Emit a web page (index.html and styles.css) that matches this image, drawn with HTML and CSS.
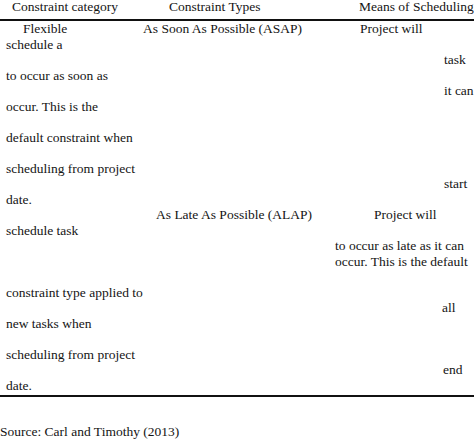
FILE: index.html
```html
<!DOCTYPE html>
<html>
<head>
<meta charset="utf-8">
<link rel="stylesheet" href="styles.css">
</head>
<body>
<div class="page">
  <div class="head">
    <div class="h1">Constraint category</div>
    <div class="h2">Constraint Types</div>
    <div class="h3">Means of Scheduling</div>
  </div>
  <div class="rule"></div>
  <div class="body">
    <div class="c1 r1 indent">Flexible</div>
    <div class="c1 r2">schedule a</div>
    <div class="c1 r4">to occur as soon as</div>
    <div class="c1 r6">occur. This is the</div>
    <div class="c1 r8">default constraint when</div>
    <div class="c1 r10">scheduling from project</div>
    <div class="c1 r12">date.</div>
    <div class="c1 r14">schedule task</div>
    <div class="c1 r18">constraint type applied to</div>
    <div class="c1 r20">new tasks when</div>
    <div class="c1 r22">scheduling from project</div>
    <div class="c1 r24">date.</div>

    <div class="c2 r1 asap">As Soon As Possible (ASAP)</div>
    <div class="c2 r13 alap">As Late As Possible (ALAP)</div>

    <div class="c3 r1 pw1">Project will</div>
    <div class="c3 r3 far">task</div>
    <div class="c3 r5 far">it can</div>
    <div class="c3 r11 far">start</div>
    <div class="c3 r13 pw2">Project will</div>
    <div class="c3 r15 near">to occur as late as it can</div>
    <div class="c3 r16 near">occur. This is the default</div>
    <div class="c3 r19 far2">all</div>
    <div class="c3 r23 far3">end</div>
  </div>
  <div class="rule bottom"></div>
  <div class="source">Source: Carl and Timothy (2013)</div>
</div>
</body>
</html>
```

FILE: styles.css
```css
html, body {
  margin: 0;
  padding: 0;
  background: #ffffff;
}
body {
  width: 474px;
  height: 439px;
  overflow: hidden;
  font-family: "Liberation Serif", "Times New Roman", serif;
  font-size: 13.5px;
  color: #141414;
}
.page {
  width: 474px;
}
.head {
  display: grid;
  grid-template-columns: 136px 190px 1fr;
  line-height: 13px;
  padding-bottom: 6px;
  white-space: nowrap;
}
.h1 { padding-left: 12px; }
.h2 { padding-left: 33px; }
.h3 { padding-left: 33px; }
.rule {
  height: 2px;
  background: #111111;
}
.rule.bottom {
  margin-top: 2px;
}
.body {
  display: grid;
  grid-template-columns: 136px 190px 1fr;
  grid-template-rows: repeat(24, 15.5px);
  line-height: 15.5px;
  white-space: nowrap;
}
.c1 { grid-column: 1; padding-left: 6px; }
.c2 { grid-column: 2; }
.c3 { grid-column: 3; }
.indent { padding-left: 23px; }
.asap { padding-left: 7px; }
.alap { padding-left: 20px; }
.pw1 { padding-left: 34px; }
.pw2 { padding-left: 48px; }
.far { padding-left: 118px; }
.far2 { padding-left: 116px; }
.far3 { padding-left: 117px; }
.near { padding-left: 9px; }
.r1 { grid-row: 1; }
.r2 { grid-row: 2; }
.r3 { grid-row: 3; }
.r4 { grid-row: 4; }
.r5 { grid-row: 5; }
.r6 { grid-row: 6; }
.r8 { grid-row: 8; }
.r10 { grid-row: 10; }
.r11 { grid-row: 11; }
.r12 { grid-row: 12; }
.r13 { grid-row: 13; }
.r14 { grid-row: 14; }
.r15 { grid-row: 15; }
.r16 { grid-row: 16; }
.r18 { grid-row: 18; }
.r19 { grid-row: 19; }
.r20 { grid-row: 20; }
.r22 { grid-row: 22; }
.r23 { grid-row: 23; }
.r24 { grid-row: 24; }
.source {
  margin-top: 27px;
  line-height: 15.5px;
  white-space: nowrap;
}
```
